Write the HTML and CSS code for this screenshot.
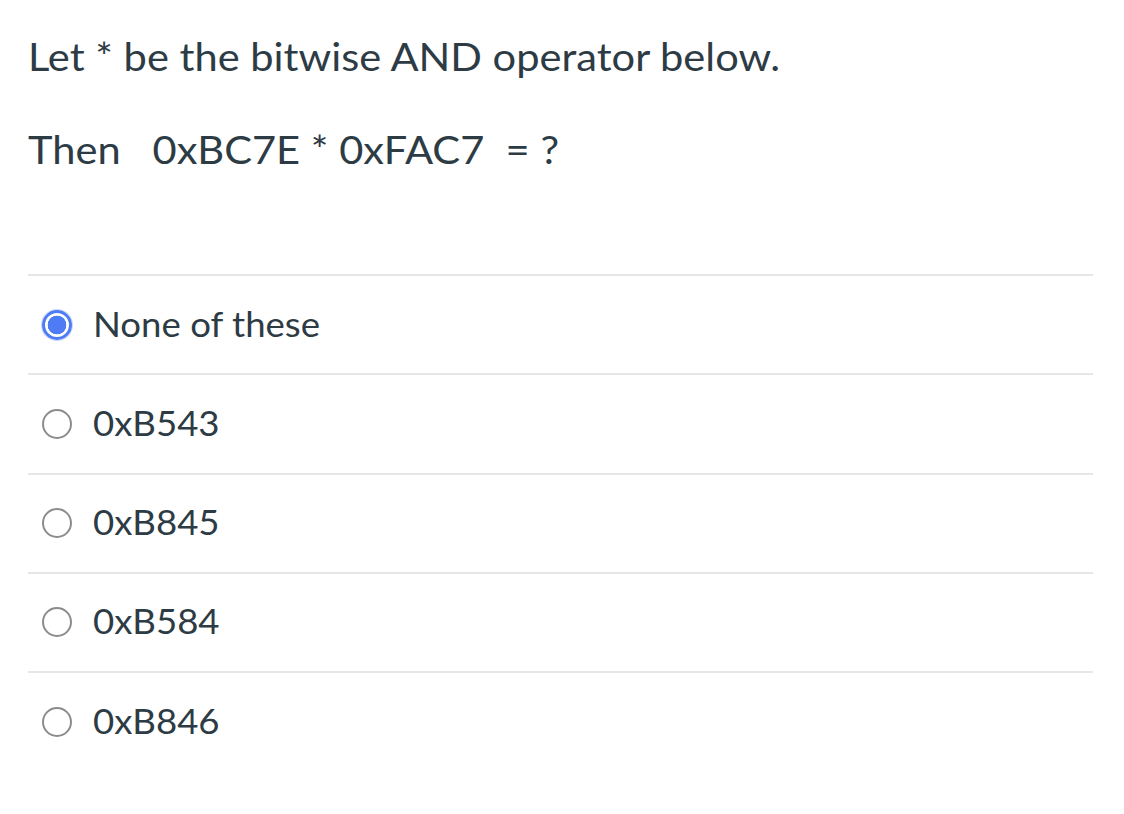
FILE: index.html
```html
<!DOCTYPE html>
<html>
<head>
<meta charset="utf-8">
<link rel="stylesheet" href="styles.css">
</head>
<body>
<div class="question">
  <p class="q-line first">Let * be the bitwise AND operator below.</p>
  <p class="q-line second">Then&nbsp;&nbsp; 0xBC7E * 0xFAC7 &nbsp;= ?</p>
</div>
<div class="answers">
  <div class="answer"><span class="radio checked"></span><span class="label">None of these</span></div>
  <div class="answer"><span class="radio"></span><span class="label">0xB543</span></div>
  <div class="answer"><span class="radio"></span><span class="label">0xB845</span></div>
  <div class="answer"><span class="radio"></span><span class="label">0xB584</span></div>
  <div class="answer"><span class="radio"></span><span class="label">0xB846</span></div>
</div>
</body>
</html>
```
FILE: styles.css
```css
html, body {
  margin: 0;
  padding: 0;
  background: #ffffff;
}
body {
  font-family: Lato, "Liberation Sans", sans-serif;
  color: #2d3b45;
  width: 1124px;
  height: 814px;
  overflow: hidden;
}
.question {
  padding: 0 28px;
}
.q-line {
  margin: 0;
  width: max-content;
  font-size: 38px;
  line-height: 50px;
  white-space: nowrap;
  transform: scaleX(1.095);
  transform-origin: left center;
}
.q-line.first {
  padding-top: 31px;
}
.q-line.second {
  padding-top: 43px;
}
.answers {
  margin: 100px 31px 0 28px;
  border-top: 2px solid #e6e6e6;
}
.answer {
  display: flex;
  align-items: center;
  height: 97.25px;
  border-bottom: 2px solid #e6e6e6;
}
.answer:last-child {
  border-bottom: none;
}
.radio {
  box-sizing: border-box;
  width: 30px;
  height: 30px;
  border-radius: 50%;
  border: 2px solid #8c8c8c;
  margin-left: 14px;
  margin-right: 21px;
  flex: none;
}
.radio.checked {
  border: 3px solid #4d7cf4;
  background: radial-gradient(circle closest-side, #4d7cf4 0 76%, #ffffff 80%);
  box-shadow: 0 0 0 1px #c9d7fb;
}
.label {
  display: inline-block;
  font-size: 35px;
  line-height: 44px;
  padding-bottom: 4px;
  white-space: nowrap;
  transform: scaleX(1.045);
  transform-origin: left center;
}
```
